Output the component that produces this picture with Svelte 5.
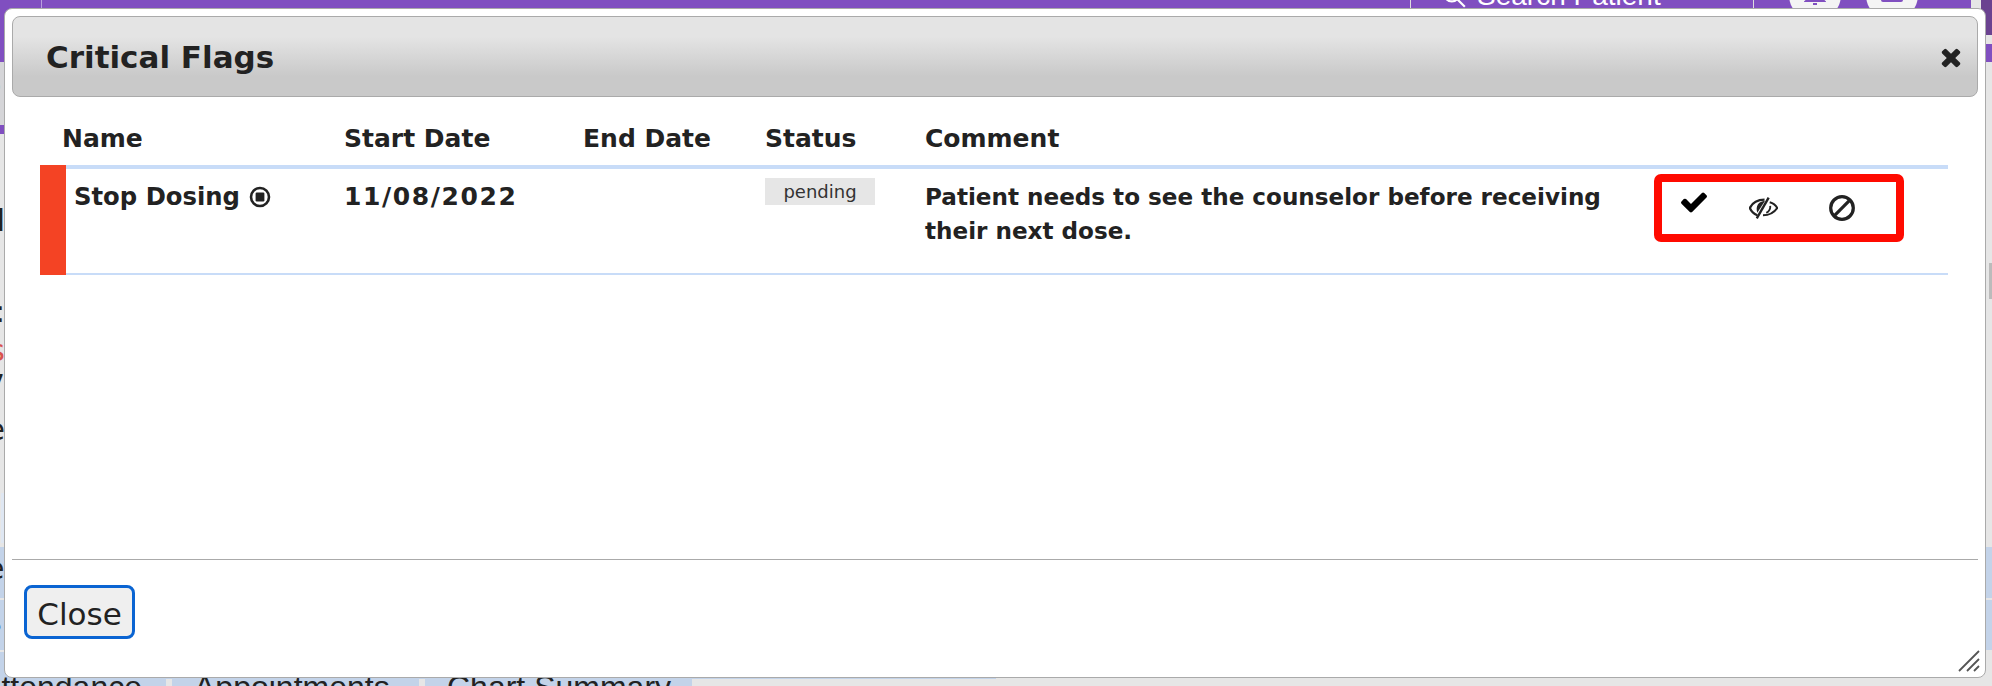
<script lang="ts">
  const flags = [
    {
      name: "Stop Dosing",
      start: "11/08/2022",
      end: "",
      status: "pending",
      comment: "Patient needs to see the counselor before receiving their next dose.",
    },
  ];

  const sideChars = [
    { ch: "l", top: 0 },
    { ch: ":", top: 61 },
    { ch: "s", top: 9, red: true },
    { ch: "7", top: 5 },
    { ch: "e", top: 14 },
  ];
</script>

<div class="viewport">
  <div class="page">
    <header class="topnav">
      <span class="topnav__rule"></span>
      <div class="topnav__search">
        <svg class="topnav__glass" viewBox="0 0 24 24" width="26" height="26">
          <circle cx="10" cy="10" r="7" fill="none" stroke="#fff" stroke-width="2" />
          <path d="M15 15l7 7" stroke="#fff" stroke-width="2" />
        </svg>
        <span>Search Patient</span>
      </div>
      <span class="topnav__btn">
        <svg viewBox="0 0 22 22" width="22" height="22">
          <path d="M11 2c-4 0-6 3-6 7 0 4-1 6-3 8h18c-2-2-3-4-3-8 0-4-2-7-6-7z" fill="none" stroke="#804fc0" stroke-width="2" />
          <path d="M9 20h4" stroke="#804fc0" stroke-width="2" />
        </svg>
      </span>
      <span class="topnav__btn topnav__btn--second">
        <svg viewBox="0 0 24 22" width="24" height="22">
          <rect x="2" y="1" width="20" height="16" rx="1" fill="none" stroke="#804fc0" stroke-width="2" />
        </svg>
      </span>
      <span class="topnav__gap"></span>
      <span class="topnav__corner"></span>
    </header>
    <div class="gapbar"></div>
    <div class="subnav"></div>
    <div class="toolbar"><span class="toolbar__char">o</span></div>
    <div class="band"></div>
    <div class="content">
      <div class="content__chars">
        {#each sideChars as c}
          <span class="content__char" class:content__char--red={c.red} style={`margin-top:${c.top}px`}>{c.ch}</span>
        {/each}
      </div>
      <div class="content__thumb"></div>
      <div class="content__tint"></div>
    </div>
    <div class="bluerow"><span>e</span><span class="bluerow__right">C</span></div>
    <div class="bluerow bluerow--second"><span>s</span></div>
    <div class="spacer"></div>
    <nav class="tabs">
      <span class="tabs__tab tabs__tab--first">Attendance</span>
      <span class="tabs__tab tabs__tab--second">Appointments</span>
      <span class="tabs__tab tabs__tab--third">Chart Summary</span>
    </nav>
  </div>

  <div class="modal">
    <div class="modal__header">
      <h1 class="modal__title">Critical Flags</h1>
      <svg class="modal__close" viewBox="0 0 1792 1792" width="28" height="28">
        <path fill="#222" d="M1490 1322q0 40-28 68l-136 136q-28 28-68 28t-68-28l-294-294-294 294q-28 28-68 28t-68-28l-136-136q-28-28-28-68t28-68l294-294-294-294q-28-28-28-68t28-68l136-136q28-28 68-28t68 28l294 294 294-294q28-28 68-28t68 28l136 136q28 28 28 68t-28 68l-294 294 294 294q28 28 28 68z" />
      </svg>
    </div>

    <div class="modal__body">
      <div class="flags__head">
        <span class="flags__head-name">Name</span>
        <span>Start Date</span>
        <span>End Date</span>
        <span>Status</span>
        <span>Comment</span>
      </div>
      {#each flags as flag}
        <div class="flags__row">
          <div class="flags__bar"></div>
          <div class="flags__cells">
            <span class="flags__name">
              {flag.name}
              <svg class="flags__stop" viewBox="0 0 22 22" width="22" height="22">
                <circle cx="11" cy="11" r="9" fill="none" stroke="#222" stroke-width="2.6" />
                <rect x="6.6" y="6.6" width="8.8" height="8.8" rx="1.2" fill="#222" />
              </svg>
            </span>
            <span class="flags__date">{flag.start}</span>
            <span>{flag.end}</span>
            <span><span class="flags__status">{flag.status}</span></span>
            <span class="flags__comment">{flag.comment}</span>
            <div class="flags__actions">
              <svg class="flags__check" viewBox="0 0 1792 1792" width="30" height="30">
                <path fill="#000" d="M1671 566q0 40-28 68l-724 724-136 136q-28 28-68 28t-68-28l-136-136-362-362q-28-28-28-68t28-68l136-136q28-28 68-28t68 28l294 295 656-657q28-28 68-28t68 28l136 136q28 28 28 68z" />
              </svg>
              <svg class="flags__eye" viewBox="0 0 28 21" width="29" height="22">
                <path d="M15 2.500C8 2.500 3 6 .8 10.500 2 13.500 4.500 16 8 17.500" fill="none" stroke="#222" stroke-width="2.200" />
                <path d="M15.500 3.500C9 4 6 9 8 15z" fill="#222" />
                <path d="M19 0.500L7.500 20.500" stroke="#222" stroke-width="2.300" />
                <path d="M20 5c3.500 1 6 3 7.300 5.500-2.800 4-7.500 7-13.800 7" fill="none" stroke="#222" stroke-width="2" />
                <path d="M20.500 8.500c.300 3-1.200 5.500-3.800 6.700" fill="none" stroke="#222" stroke-width="1.800" />
              </svg>
              <svg class="flags__ban" viewBox="0 0 26 26" width="28" height="28">
                <circle cx="13" cy="13" r="10.500" fill="none" stroke="#222" stroke-width="3" />
                <path d="M20.500 5.500L5.500 20.500" stroke="#222" stroke-width="3" />
              </svg>
            </div>
          </div>
        </div>
      {/each}
    </div>

    <div class="modal__footer">
      <button class="modal__button">Close</button>
    </div>

    <svg class="modal__grip" viewBox="0 0 22 22" width="22" height="22">
      <path d="M1 21L21 1M9 21L21 9M16 21l5-5" stroke="#555" stroke-width="1.800" />
    </svg>
  </div>
</div>

<style>
  :global(body) {
    margin: 0;
    background: #e6e6e6;
    font-family: "DejaVu Sans", Verdana, sans-serif;
  }

  .viewport {
    position: relative;
    height: 686px;
    overflow: hidden;
    color: #222;
  }

  /* page behind the dialog, scrolled a bit */
  .page {
    display: flex;
    flex-direction: column;
    height: 710px;
    margin-top: -24px;
  }

  .topnav {
    display: flex;
    align-items: flex-start;
    flex: 0 0 59px;
    background: #804fc0;
    color: #fff;
  }

  .topnav__rule {
    width: 1px;
    height: 59px;
    margin-left: 41px;
    background: #b9a0de;
  }

  .topnav__search {
    display: flex;
    align-items: center;
    gap: 10px;
    box-sizing: border-box;
    width: 344px;
    height: 59px;
    margin-left: 1368px;
    padding: 0 0 20px 30px;
    border-left: 1px solid #ddd;
    border-right: 1px solid #ddd;
    font-family: "Liberation Sans", Arial, sans-serif;
    font-size: 28px;
    line-height: 32px;
  }

  .topnav__btn {
    display: flex;
    align-items: center;
    justify-content: center;
    width: 52px;
    height: 52px;
    margin: -7px 0 0 35px;
    border-radius: 50%;
    background: #f4f4f4;
  }

  .topnav__btn--second {
    margin-left: 25px;
  }

  .topnav__gap {
    flex: 1;
    height: 59px;
    margin-left: 53px;
    background: #e6e6e6;
  }

  .topnav__corner {
    width: 11px;
    height: 59px;
    background: #6b4290;
  }

  .gapbar {
    flex: 0 0 9px;
    background: linear-gradient(90deg, #804fc0 99.5%, #e6e6e6 99.5%);
  }

  .subnav {
    flex: 0 0 18px;
    background: #804fc0;
  }

  .toolbar {
    flex: 0 0 63px;
    background: linear-gradient(90deg, #d5d5d8 50%, #e6e6e6 50%);
    overflow: hidden;
    position: relative;
  }

  .toolbar__char {
    position: absolute;
    left: -16px;
    top: 8px;
    font-size: 28px;
    line-height: 32px;
  }

  .band {
    flex: 0 0 9px;
    background: linear-gradient(90deg, #804fc0 50%, #e6e6e6 50%);
  }

  .content {
    flex: 0 0 413px;
    background: #e6e6e6;
    position: relative;
    overflow: hidden;
    padding-top: 72px;
    box-sizing: border-box;
  }

  .content__chars {
    display: flex;
    flex-direction: column;
    width: 5px;
    overflow: hidden;
    font-size: 30px;
    line-height: 30px;
    direction: rtl;
  }

  .content__char--red {
    color: #d9534f;
  }

  .content__thumb {
    position: absolute;
    right: 0;
    top: 129px;
    width: 3px;
    height: 36px;
    background: #bbb;
  }

  .content__tint {
    position: absolute;
    left: 1px;
    top: 359px;
    width: 4px;
    height: 50px;
    background: #dfe7f2;
  }

  .bluerow {
    display: flex;
    justify-content: space-between;
    flex: 0 0 51px;
    overflow: hidden;
    background: #c3d3e9;
    font-size: 30px;
    line-height: 44px;
    margin-bottom: 2px;
  }

  .bluerow > span:first-child {
    margin-left: -14px;
  }

  .bluerow__right {
    margin-right: -20px;
  }

  .bluerow--second {
    flex-basis: 50px;
  }

  .spacer {
    flex: 0 0 27px;
    background: linear-gradient(90deg, #c3d3e9 50%, #e6e6e6 50%);
  }

  .tabs {
    display: flex;
    gap: 6px;
    height: 60px;
    margin-top: -11px;
  }

  .tabs__tab {
    display: flex;
    box-sizing: border-box;
    height: 60px;
    padding: 0 22px;
    overflow: hidden;
    background: #c3d3e9;
    font-family: "Liberation Sans", Arial, sans-serif;
    font-size: 32px;
    line-height: 38px;
    white-space: nowrap;
  }

  .tabs__tab--first {
    flex: 0 0 166px;
    justify-content: flex-end;
    padding: 0 24px 0 0;
  }

  .tabs__tab--second {
    flex: 0 0 247px;
  }

  .tabs__tab--third {
    flex: 0 0 267px;
  }

  .modal {
    position: absolute;
    left: 4px;
    top: 8px;
    width: 1982px;
    height: 670px;
    box-sizing: border-box;
    display: flex;
    flex-direction: column;
    padding: 7px;
    background: #fff;
    border: 1px solid #aaa;
    border-radius: 8px;
  }

  .modal__header {
    display: flex;
    align-items: center;
    justify-content: space-between;
    box-sizing: border-box;
    flex: 0 0 81px;
    padding: 0 12px 0 33px;
    border: 1px solid #aaa;
    border-radius: 8px;
    background: linear-gradient(#e4e4e4 25%, #c9c9c9 75%);
  }

  .modal__title {
    margin: 0;
    font-size: 31px;
    font-weight: 700;
    color: #222;
  }

  .modal__body {
    flex: 1;
    width: 1908px;
    margin-left: 28px;
    font-size: 23.1px;
    font-weight: 700;
    color: #222;
  }

  .flags__head {
    display: grid;
    grid-template-columns: 304px 239px 182px 160px 1fr;
    align-items: end;
    box-sizing: border-box;
    height: 68px;
    padding-bottom: 12px;
    font-size: 25px;
  }

  .flags__head-name {
    padding-left: 22px;
  }

  .flags__row {
    display: flex;
    height: 110px;
  }

  .flags__bar {
    flex: 0 0 26px;
    background: #f44324;
  }

  .flags__cells {
    flex: 1;
    display: grid;
    grid-template-columns: 278px 239px 182px 160px 729px 1fr;
    box-sizing: border-box;
    border-top: 4px solid #c8dcf8;
    border-bottom: 2px solid #c8dcf8;
    line-height: 34px;
  }

  .flags__cells > span {
    padding-top: 11px;
  }

  .flags__name {
    padding-left: 8px;
    white-space: nowrap;
    font-size: 24.3px;
  }

  .flags__date {
    font-size: 25px;
    letter-spacing: 1.600px;
  }

  .flags__stop {
    vertical-align: -3px;
    margin-left: 1px;
  }

  .flags__status {
    display: block;
    width: 110px;
    height: 27px;
    margin-top: -2px;
    background: #e6e6e6;
    font-size: 18px;
    font-weight: 400;
    line-height: 27px;
    text-align: center;
    color: #333;
  }

  .flags__actions {
    display: flex;
    align-items: center;
    box-sizing: border-box;
    width: 250px;
    height: 68px;
    margin-top: 5px;
    padding: 0 0 0 17px;
    border: 8px solid #ff0a00;
    border-radius: 7px;
  }

  .flags__check {
    margin-top: -12px;
  }

  .flags__eye {
    margin-left: 40px;
  }

  .flags__ban {
    margin-left: 50px;
  }

  .modal__footer {
    display: flex;
    align-items: flex-start;
    box-sizing: border-box;
    flex: 0 0 111px;
    padding-top: 25px;
    border-top: 1px solid #aaa;
  }

  .modal__button {
    box-sizing: border-box;
    width: 111px;
    height: 54px;
    margin-left: 12px;
    padding: 3px 0 0;
    border: 3px solid #0a64d2;
    border-radius: 8px;
    background: #efefef;
    font-family: "DejaVu Sans", Verdana, sans-serif;
    font-size: 31px;
    color: #222;
  }

  .modal__grip {
    position: absolute;
    right: 5px;
    bottom: 5px;
  }
</style>
